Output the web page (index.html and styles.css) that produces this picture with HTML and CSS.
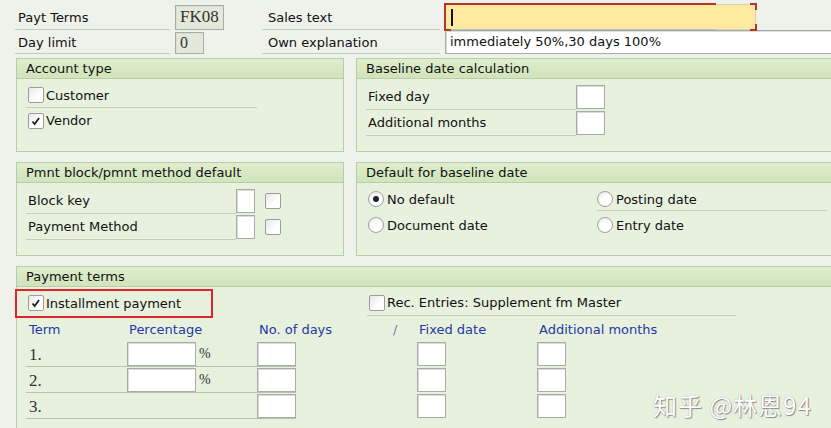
FILE: index.html
```html
<!DOCTYPE html>
<html>
<head>
<meta charset="utf-8">
<link rel="stylesheet" href="styles.css">
</head>
<body>
<div class="page">
  <div class="top">
    <div class="lbl">Payt Terms</div>
    <div class="cell"><div class="inp ro w49 serif">FK08</div></div>
    <div class="lbl lbl2">Sales text</div>
    <div class="cell"><div class="inp yellow"><span class="caret"></span><i class="cn tl"></i><i class="cn tr"></i><i class="cn bl"></i><i class="cn br"></i></div></div>
    <div class="lbl r2">Day limit</div>
    <div class="cell r2"><div class="inp ro w29 serif sm">0</div></div>
    <div class="lbl lbl2 r2">Own explanation</div>
    <div class="cell r2"><div class="inp white wide">immediately 50%,30 days 100%</div></div>
  </div>

  <div class="boxrow">
    <div class="box left">
      <div class="box-h">Account type</div>
      <div class="box-b acct">
        <div class="line cb-line"><span class="cb"></span>Customer</div>
        <div class="line cb-line noline"><span class="cb on"><svg viewBox="0 0 16 16"><path d="M4 8.5 L6.5 11.5 L11.5 4.5" /></svg></span>Vendor</div>
      </div>
    </div>
    <div class="box right">
      <div class="box-h">Baseline date calculation</div>
      <div class="box-b">
        <div class="fld"><span class="fl-lbl w208">Fixed day</span><span class="inp white w28 h23"></span></div>
        <div class="fld"><span class="fl-lbl w208">Additional months</span><span class="inp white w28 h23"></span></div>
      </div>
    </div>
  </div>

  <div class="boxrow">
    <div class="box left">
      <div class="box-h">Pmnt block/pmnt method default</div>
      <div class="box-b">
        <div class="fld"><span class="fl-lbl w208">Block key</span><span class="inp white w18 h23"></span><span class="cb sq"></span></div>
        <div class="fld"><span class="fl-lbl w208">Payment Method</span><span class="inp white w18 h23"></span><span class="cb sq"></span></div>
      </div>
    </div>
    <div class="box right">
      <div class="box-h">Default for baseline date</div>
      <div class="box-b radios">
        <div class="rrow"><div class="rcell"><span class="rd on"></span>No default</div><div class="rcell ul"><span class="rd"></span>Posting date</div></div>
        <div class="rrow"><div class="rcell"><span class="rd"></span>Document date</div><div class="rcell"><span class="rd"></span>Entry date</div></div>
      </div>
    </div>
  </div>

  <div class="box full">
    <div class="box-h">Payment terms</div>
    <div class="pt-b">
      <div class="pt-top">
        <div class="inst"><span class="cb on"><svg viewBox="0 0 16 16"><path d="M4 8.5 L6.5 11.5 L11.5 4.5" /></svg></span>Installment payment</div>
        <div class="rec"><span class="cb"></span>Rec. Entries: Supplement fm Master</div>
      </div>
      <div class="hdr">
        <span class="h1">Term</span><span class="h2">Percentage</span><span class="h3">No. of days</span><span class="h4">/</span><span class="h5">Fixed date</span><span class="h6">Additional months</span>
      </div>
      <div class="trow">
        <div class="tl"><span class="num">1.</span><span class="inp white w68 h23"></span><span class="pct">%</span><span class="inp white w38 h23"></span></div>
        <span class="inp white w28 h23 fx"></span><span class="inp white w28 h23 am"></span>
      </div>
      <div class="trow">
        <div class="tl"><span class="num">2.</span><span class="inp white w68 h23"></span><span class="pct">%</span><span class="inp white w38 h23"></span></div>
        <span class="inp white w28 h23 fx"></span><span class="inp white w28 h23 am"></span>
      </div>
      <div class="trow">
        <div class="tl"><span class="num">3.</span><span class="nopct"></span><span class="inp white w38 h23"></span></div>
        <span class="inp white w28 h23 fx"></span><span class="inp white w28 h23 am"></span>
      </div>
      <div class="wm">知乎 @林恩94</div>
    </div>
  </div>
</div>
</body>
</html>
```
FILE: styles.css
```css
html, body { margin: 0; padding: 0; }
body {
  width: 831px; height: 428px; overflow: hidden;
  background: #eef2ea;
  font-family: "DejaVu Sans", Verdana, sans-serif;
  font-size: 13px;
  color: #111;
}
.page { width: 831px; }
.top {
  display: grid;
  grid-template-columns: 160px 93px 177px 400px;
  grid-template-rows: 26px 24px;
  padding-left: 15px;
  padding-top: 4px;
}
.lbl {
  margin-right: 5px;
  border-bottom: 1px solid #c6cfbe;
  padding-left: 3px;
  line-height: 27px;
  height: 26px;
  box-sizing: border-box;
}
.lbl.r2 { line-height: 25px; height: 24px; }
.lbl2 { margin-right: 5px; margin-left: -6px; padding-left: 6px; }
.cell { display: flex; align-items: flex-start; }
.inp {
  display: inline-block;
  box-sizing: border-box;
  border: 1px solid #a9aca6;
  box-shadow: inset 1px 1px 0 #dcdcdc;
}
.ro {
  background: #e3e9da;
  height: 25px; margin-top: 1px;
  font-size: 17px; line-height: 22px; padding-left: 4px;
  color: #333;
}
.ro.sm { height: 22px; margin-top: 2px; line-height: 20px; font-size: 16px; }
.serif { font-family: "Liberation Serif", "Times New Roman", serif; }
.w49 { width: 49px; }
.w29 { width: 29px; }
.yellow {
  position: relative;
  width: 311px; height: 26px;
  background: #fde9a0;
  border: 1px solid #d9d2b4;
  box-shadow: none;
}
.caret { position: absolute; left: 5px; top: 4px; width: 2px; height: 17px; background: #111; }
.cn { position: absolute; width: 5px; height: 5px; border-color: #b3362c; border-style: solid; border-width: 0; }
.cn.tl { left: -2px; top: -2px; border-left-width: 2px; border-top-width: 2px; }
.cn.tr { right: -2px; top: -2px; border-right-width: 2px; border-top-width: 2px; }
.cn.bl { left: -2px; bottom: -2px; border-left-width: 2px; border-bottom-width: 2px; }
.cn.br { right: -2px; bottom: -2px; border-right-width: 2px; border-bottom-width: 2px; }
.white { background: #fff; }
.wide {
  width: 400px; height: 24px;
  line-height: 22px; padding-left: 4px;
}
.boxrow {
  display: flex;
  gap: 12px;
  padding-left: 16px;
  margin-top: 4px;
}
.boxrow + .boxrow { margin-top: 10px; }
.box {
  border: 1px solid #b9cda8;
  background: #e8f1de;
  box-sizing: border-box;
  flex: none;
}
.box.left { width: 328px; height: 94px; }
.box.right { width: 490px; height: 94px; }
.box.full { width: 830px; height: 170px; margin-left: 16px; margin-top: 10px; }
.box-h {
  height: 20px;
  box-sizing: border-box;
  background: linear-gradient(#dfedce, #d1e4ba);
  border-bottom: 1px solid #b9cda8;
  padding-left: 9px;
  line-height: 19px;
}
.box-b { padding: 5px 0 0 9px; }
.box-b.acct { padding-top: 4px; }
.line {
  display: flex; align-items: center;
  height: 25px; box-sizing: border-box;
  width: 231px;
  border-bottom: 1px solid #c4cfbb;
}
.line.noline { border-bottom: none; }
.cb {
  display: inline-block;
  width: 16px; height: 16px;
  box-sizing: border-box;
  border: 1px solid #9c9f99;
  border-radius: 2px;
  background: linear-gradient(135deg, #e6e6e6, #ffffff 60%);
  margin: 0 2px 0 2px;
  flex: none;
}
.cb svg { display: block; width: 14px; height: 14px; }
.cb svg path { fill: none; stroke: #1e1e1e; stroke-width: 2; }
.fld {
  display: flex; align-items: center;
  height: 26px;
}
.fl-lbl {
  height: 25px; line-height: 25px;
  border-bottom: 1px solid #c4cfbb;
  padding-left: 2px;
  box-sizing: content-box;
}
.fld .inp { align-self: flex-start; margin-top: 1px; }
.w208 { width: 208px; }
.w18 { width: 19px; }
.w28 { width: 29px; }
.w38 { width: 39px; }
.w68 { width: 69px; }
.h23 { height: 24px; }
.cb.sq { margin-left: 10px; }
.radios { padding-left: 11px; padding-top: 5px; }
.rrow { display: flex; height: 26px; }
.rcell {
  display: flex; align-items: center;
  width: 229px; height: 22px;
}
.rcell.ul { width: 230px; border-bottom: 1px solid #c4cfbb; height: 22px; }
.rd {
  display: inline-block; position: relative;
  width: 16px; height: 16px; box-sizing: border-box;
  border: 1px solid #a0a39d; border-radius: 50%;
  background: radial-gradient(circle at 60% 60%, #ffffff 40%, #e2e2e2);
  margin-right: 3px;
}
.rd.on::after {
  content: ""; position: absolute; left: 4px; top: 4px;
  width: 6px; height: 6px; border-radius: 50%; background: #222;
}
.pt-b { position: relative; padding-left: 9px; }
.pt-top { display: flex; align-items: center; height: 30px; padding-top: 2px; box-sizing: border-box; }
.inst {
  display: flex; align-items: center;
  width: 196px; height: 27px;
  margin-left: -10px; padding-left: 10px;
  box-sizing: border-box;
  outline: 2px solid #e0242a;
  outline-offset: -1px;
}
.rec {
  display: flex; align-items: center;
  margin-left: 155px;
  width: 369px; height: 24px;
  border-bottom: 1px solid #c4cfbb;
}
.hdr {
  display: flex; height: 25px; align-items: center;
  color: #2438a8;
  padding-left: 3px;
}
.hdr span { flex: none; }
.h1 { width: 100px; }
.h2 { width: 130px; }
.h3 { width: 134px; }
.h4 { width: 26px; color: #6a78c0; }
.h5 { width: 120px; }
.trow { display: flex; height: 26px; align-items: flex-start; }
.tl {
  display: flex; align-items: flex-start;
  width: 270px; height: 24px;
  border-bottom: 1px solid #b8c2ae;
}
.num {
  width: 101px; padding-left: 3px; box-sizing: border-box;
  font-family: "Liberation Serif", "Times New Roman", serif;
  font-size: 17px; line-height: 25px; color: #333;
}
.pct {
  width: 61px; padding-left: 3px; box-sizing: border-box;
  font-family: "Liberation Serif", "Times New Roman", serif;
  font-size: 14px; line-height: 24px; color: #333;
}
.nopct { width: 130px; }
.fx { margin-left: 121px; }
.am { margin-left: 91px; }
.wm {
  position: absolute;
  left: 636px; top: 100px;
  font-family: "Noto Sans CJK SC", "Noto Sans", sans-serif;
  font-size: 24px;
  letter-spacing: 1px;
  color: #ffffff;
  text-shadow: 1px 1px 1px #8a8a8a, 0 0 1px #999;
}
```
